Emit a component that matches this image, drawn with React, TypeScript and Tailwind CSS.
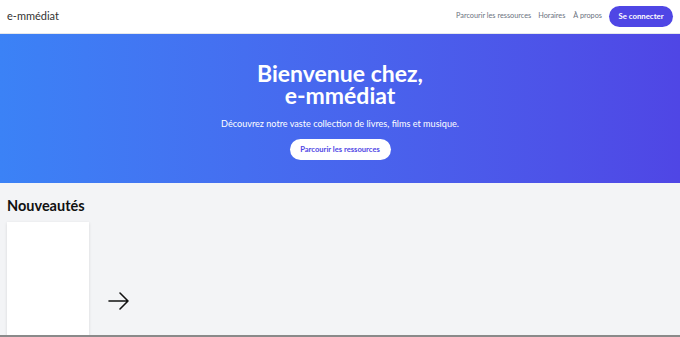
import React from "react";

export default function App() {
  return (
    <div className="min-h-screen bg-[#f3f4f6]" style={{ fontFamily: 'Lato, "Noto Sans", sans-serif' }}>
      <header className="h-[34px] bg-white flex items-center justify-between pl-[7px] pr-[7px] border-b border-[#e5e7eb]">
        <div className="text-[11px] text-[#333] pb-[1px]">e-mmédiat</div>
        <nav className="flex items-center whitespace-nowrap">
          <a className="text-[7.3px] text-[#6b7280]">Parcourir les ressources</a>
          <a className="text-[7.3px] text-[#6b7280] ml-[7px]">Horaires</a>
          <a className="text-[7.3px] text-[#6b7280] ml-[8px]">À propos</a>
          <button className="ml-[7px] h-[21px] w-[64px] rounded-full bg-[#4f46e5] text-white text-[7.8px] font-bold">Se connecter</button>
        </nav>
      </header>
      <section className="h-[149px] bg-gradient-to-r from-[#3b82f6] to-[#4f46e5] flex flex-col items-center pt-[28px] text-white whitespace-nowrap">
        <h1 className="text-[23px] font-bold leading-[22px] text-center">Bienvenue chez,<br />e-mmédiat</h1>
        <p className="text-[9.1px] mt-[11px] leading-[13px]">Découvrez notre vaste collection de livres, films et musique.</p>
        <button className="mt-[9px] h-[21px] w-[101px] rounded-full bg-white text-[#4f46e5] text-[7.6px] font-bold">Parcourir les ressources</button>
      </section>
      <section className="px-[7px] pt-[13px]">
        <h2 className="text-[14.5px] font-bold text-[#111] leading-[20px]">Nouveautés</h2>
        <div className="flex items-center mt-[6px]">
          <div className="w-[82px] h-[140px] bg-white shadow-[0_1px_3px_rgba(0,0,0,0.12)]" />
          <svg className="ml-[18px] mt-[18px]" width="24" height="24" viewBox="0 0 24 24" fill="none" stroke="#111" strokeWidth="1.6" strokeLinecap="round" strokeLinejoin="round">
            <path d="M2 12h19M13 4l8 8-8 8" />
          </svg>
        </div>
      </section>
      <div className="fixed left-0 right-0 bottom-0 h-[2px] bg-[#8a8a8a]" />
    </div>
  );
}
